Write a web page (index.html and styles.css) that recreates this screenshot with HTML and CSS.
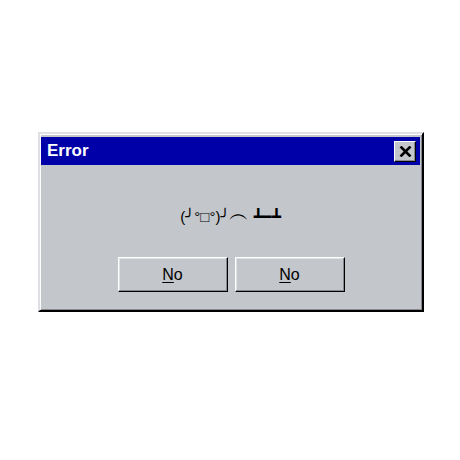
FILE: index.html
```html
<!DOCTYPE html>
<html lang="en">
<head>
  <meta charset="UTF-8" />
  <title>Error</title>
  <link rel="stylesheet" href="styles.css">
</head>
<body>

  <div class="page">
    <div class="window">
      <div class="titlebar">
        <span class="title">Error</span>
        <button class="close-btn" aria-label="Close">
          <svg width="13" height="11" viewBox="0 0 13 11">
            <path d="M1.5 0.5 L11.5 10.5 M11.5 0.5 L1.5 10.5" stroke="#000" stroke-width="2.6" fill="none"/>
          </svg>
        </button>
      </div>

      <div class="message">(╯°□°)╯<span class="arc">︵</span> ┻━┻</div>

      <div class="buttons">
        <button class="btn"><u>N</u>o</button>
        <button class="btn"><u>N</u>o</button>
      </div>
    </div>
  </div>

</body>
</html>
```

FILE: styles.css
```css
* {
  margin: 0;
  padding: 0;
  box-sizing: border-box;
}

body {
  background: #ffffff;
  font-family: 'Liberation Sans', Arial, sans-serif;
}

.page {
  padding: 132px 0 0 38px;
}

.window {
  width: 386px;
  height: 180px;
  background: #c3c6ca;
  border: 2px solid;
  border-color: #dfe0e3 #000000 #000000 #dfe0e3;
  box-shadow: inset 1px 1px 0 #ffffff, inset -1px -1px 0 #868a8e;
  padding: 3px 2px 0 1px;
}

.titlebar {
  height: 28px;
  background: #0000a8;
  display: flex;
  align-items: center;
  justify-content: space-between;
  padding: 0 4px 0 6px;
}

.title {
  color: #ffffff;
  font-weight: 700;
  font-size: 17px;
}

.close-btn {
  width: 22px;
  height: 21px;
  background: #c3c6ca;
  border: 1px solid;
  border-color: #ffffff #000000 #000000 #ffffff;
  box-shadow: inset -1px -1px 0 #868a8e;
  display: flex;
  align-items: center;
  justify-content: center;
}

.message {
  text-align: center;
  font-family: 'Liberation Sans', 'DejaVu Sans', sans-serif;
  font-size: 15px;
  margin-top: 38px;
  height: 20px;
  line-height: 20px;
}

.arc {
  font-family: 'DejaVu Sans', sans-serif;
  font-size: 20px;
  line-height: 1;
  vertical-align: 2px;
}

.buttons {
  display: flex;
  justify-content: center;
  gap: 7px;
  margin-top: 34px;
  padding-left: 1px;
}

.btn {
  width: 110px;
  height: 35px;
  background: #c3c6ca;
  border: 1px solid;
  border-color: #ffffff #000000 #000000 #ffffff;
  box-shadow: inset -1px -1px 0 #868a8e, inset 1px 1px 0 #dfe0e3;
  font-family: 'Liberation Sans', Arial, sans-serif;
  font-size: 16px;
  color: #000000;
}

.btn u {
  text-decoration-thickness: 1px;
  text-underline-offset: 2px;
}
```
